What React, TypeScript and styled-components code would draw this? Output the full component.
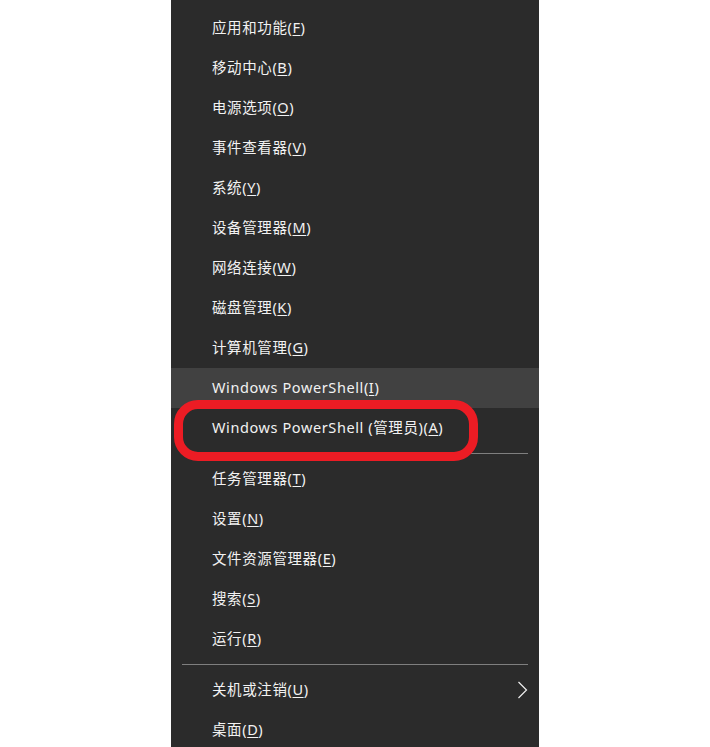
import React from "react";
import styled, { createGlobalStyle } from "styled-components";

const Global = createGlobalStyle`
  html, body { margin: 0; padding: 0; background: #ffffff; }
  body { font-family: "Noto Sans", "Noto Sans CJK SC", sans-serif; }
`;

const Page = styled.div`
  width: 710px;
  height: 747px;
  overflow: hidden;
  background: #ffffff;
`;

const Menu = styled.div`
  position: relative;
  margin-left: 171px;
  width: 368px;
  height: 747px;
  padding-top: 8px;
  box-sizing: border-box;
  background: #2b2b2b;
  display: flex;
  flex-direction: column;
`;

const Item = styled.div<{ $hover?: boolean }>`
  height: 40px;
  box-sizing: border-box;
  flex: none;
  display: flex;
  align-items: center;
  justify-content: space-between;
  padding: 0 10px 2px 41px;
  background: ${(p) => (p.$hover ? "#414141" : "transparent")};
  color: #f2f2f2;
  font-family: "Noto Sans", "Noto Sans CJK SC", sans-serif;
  font-size: 14.5px;
  letter-spacing: 0.6px;
  white-space: nowrap;
`;

const Label = styled.span`
  line-height: 20px;
`;

const Key = styled.span`
  text-decoration: underline;
  text-underline-offset: 2px;
  text-decoration-thickness: 1px;
`;

const Separator = styled.div`
  flex: none;
  height: 1px;
  margin: 5px 11px;
  background: #7f7f7f;
`;

const Highlight = styled.div`
  position: absolute;
  left: 3px;
  top: 400px;
  width: 304px;
  height: 61px;
  box-sizing: border-box;
  border: 9px solid #ec1c24;
  border-radius: 24px;
  pointer-events: none;
`;

const ChevronBox = styled.span`
  display: flex;
  margin-top: 2px;
`;

const Chevron = () => (
  <ChevronBox>
    <svg width="12" height="18" viewBox="0 0 12 18" aria-hidden="true">
      <path d="M1.5 1 L9.5 9 L1.5 17" fill="none" stroke="#f0f0f0" strokeWidth="1.2" />
    </svg>
  </ChevronBox>
);

type Entry = { text: string; key: string; hover?: boolean; arrow?: boolean };

const groupA: Entry[] = [
  { text: "应用和功能", key: "F" },
  { text: "移动中心", key: "B" },
  { text: "电源选项", key: "O" },
  { text: "事件查看器", key: "V" },
  { text: "系统", key: "Y" },
  { text: "设备管理器", key: "M" },
  { text: "网络连接", key: "W" },
  { text: "磁盘管理", key: "K" },
  { text: "计算机管理", key: "G" },
  { text: "Windows PowerShell", key: "I", hover: true },
  { text: "Windows PowerShell (管理员)", key: "A" },
];

const groupB: Entry[] = [
  { text: "任务管理器", key: "T" },
  { text: "设置", key: "N" },
  { text: "文件资源管理器", key: "E" },
  { text: "搜索", key: "S" },
  { text: "运行", key: "R" },
];

const groupC: Entry[] = [
  { text: "关机或注销", key: "U", arrow: true },
  { text: "桌面", key: "D" },
];

const Row = ({ e }: { e: Entry }) => (
  <Item $hover={e.hover}>
    <Label>
      {e.text}(<Key>{e.key}</Key>)
    </Label>
    {e.arrow && <Chevron />}
  </Item>
);

export default function App() {
  return (
    <Page>
      <Global />
      <Menu>
        {groupA.map((e) => (
          <Row key={e.key} e={e} />
        ))}
        <Separator />
        {groupB.map((e) => (
          <Row key={e.key} e={e} />
        ))}
        <Separator />
        {groupC.map((e) => (
          <Row key={e.key} e={e} />
        ))}
        <Highlight />
      </Menu>
    </Page>
  );
}
